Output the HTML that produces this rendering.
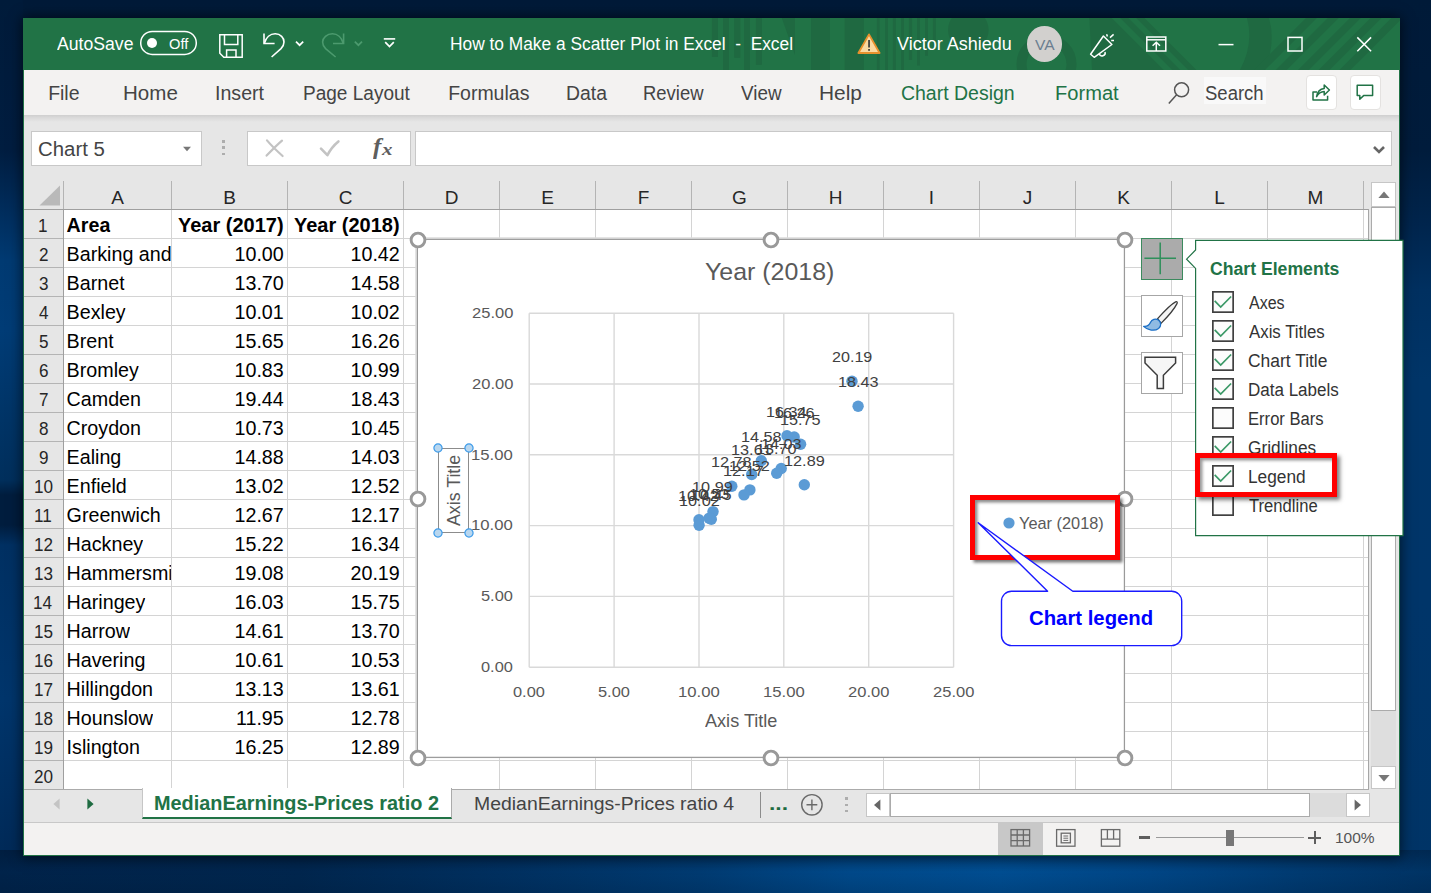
<!DOCTYPE html>
<html><head><meta charset="utf-8"><title>How to Make a Scatter Plot in Excel - Excel</title>
<style>
html,body{margin:0;padding:0}
body{width:1431px;height:893px;overflow:hidden;position:relative;font-family:"Liberation Sans",sans-serif;
background:#00234a}
.b{position:absolute;box-sizing:border-box}
.t{position:absolute;white-space:pre;transform-origin:0 50%;font-family:"Liberation Sans",sans-serif}
svg{position:absolute;overflow:visible}
</style></head><body>
<div class="b " style="left:0px;top:0px;width:1431px;height:893px;background:linear-gradient(180deg,#001a38 0px,#001c3c 150px,#00254d 225px,#003060 290px,#003568 380px,#003569 600px,#003466 893px)"></div>
<div class="b " style="left:0px;top:850px;width:1431px;height:43px;background:linear-gradient(90deg,#00234a 0px,#00264e 300px,#003060 500px,#003b72 700px,#00498a 850px,#004e92 1000px,#004686 1150px,#003b72 1300px,#003364 1431px)"></div>
<div class="b " style="left:0px;top:850px;width:1431px;height:43px;background:linear-gradient(180deg,rgba(0,20,45,.35) 0px,rgba(0,20,45,0) 22px,rgba(0,20,45,.18) 43px)"></div>
<div class="b " style="left:0px;top:0px;width:23px;height:850px;background:linear-gradient(180deg,#001b3a 0px,#001d40 150px,#002e5e 215px,#003a72 260px,#003c76 330px,#003466 420px,#002f5c 480px,#001d3e 495px,#001d3e 525px,#003062 545px,#00356b 700px,#002a58 850px)"></div>
<div class="b " style="left:23px;top:18px;width:1377px;height:838px;background:#e6e6e6;box-shadow:0 0 12px 1px rgba(0,0,0,.6)"></div>
<div class="b " style="left:23px;top:18px;width:1377px;height:838px;border:1px solid #217346;border-top:none;pointer-events:none"></div>
<div class="b " style="left:23px;top:18px;width:1377px;height:52px;background:#217346;overflow:hidden">
<svg width="1377" height="52" viewBox="23 18 1377 52" style="left:0;top:0">
<g fill="#1f6941">
<rect x="711.9" y="18" width="6.0" height="39.0"/>
<rect x="723.0" y="18" width="6.0" height="52.0"/>
<rect x="734.2" y="18" width="6.1" height="39.8"/>
<rect x="744.0" y="18" width="6.0" height="52.0"/>
<rect x="755.9" y="18" width="6.0" height="46.8"/>
<rect x="811.1" y="18" width="18.9" height="52.0"/>
<rect x="844.7" y="18" width="19.1" height="52.0"/>
<rect x="876.8" y="18" width="2.8" height="52.0"/>
<rect x="885.2" y="18" width="2.8" height="52.0"/>
<rect x="892.8" y="18" width="3.0" height="52.0"/>
<rect x="901.2" y="18" width="2.8" height="52.0"/>
<rect x="908.9" y="18" width="3.2" height="42.0"/>
<rect x="917.0" y="18" width="3.0" height="47.5"/>
<rect x="925.0" y="18" width="3.0" height="37.7"/>
<rect x="932.9" y="18" width="2.9" height="30.0"/>
<polygon points="781.8,18 795,18 795,55"/>
<circle cx="968.3" cy="29.9" r="20.3"/>
<path fill-rule="evenodd" d="M1016.5 64.1 a30 30 0 1 0 60 0 a30 30 0 1 0 -60 0 Z M1026.5 64.1 a20 20 0 1 0 40 0 a20 20 0 1 0 -40 0 Z"/>
<polygon points="1089.4,18 1111.7,18 1163.7,70 1092,70"/>
<polygon points="1120.1,18 1128.3,18 1180.3,70 1172.1,70"/>
<polygon points="1136.2,18 1144.4,18 1196.4,70 1188.2,70"/>
<path d="M1247 18 Q1254 44 1240 70 L1265 70 Q1276 42 1269 18 Z"/>
<polygon points="1306.0,18 1316.9,18 1264.9,70 1254.0,70"/>
<polygon points="1327.8,18 1338.7,18 1286.7,70 1275.8,70"/>
<polygon points="1350.0,18 1360.9,18 1308.9,70 1298.0,70"/>
<polygon points="1370.6,18 1381.5,18 1329.5,70 1318.6,70"/>
<polygon points="1391.5,18 1402.4,18 1350.4,70 1339.5,70"/>
</g></svg></div>
<span class="t" style="left:57.30px;top:36.00px;font-size:17.50px;line-height:17.50px;color:#fff;transform:scaleX(1.0072);">AutoSave</span>
<svg width="60" height="28" viewBox="139 29 60 28" style="left:139px;top:29px"><rect x="140.7" y="31.4" width="55.6" height="23" rx="11.5" fill="none" stroke="#fff" stroke-width="1.5"/></svg>
<div class="b " style="left:147.3px;top:38.2px;width:10px;height:10px;background:#fff;border-radius:50%"></div>
<span class="t" style="left:168.64px;top:37.00px;font-size:14.50px;line-height:14.50px;color:#fff;transform:scaleX(1.0115);">Off</span>
<svg width="200" height="36" viewBox="210 26 200 36" style="left:210px;top:26px" fill="none" stroke="#fff" stroke-width="1.5">
<path d="M219.8 34.8 H242.2 V57.2 H223.8 L219.8 53.2 Z"/><path d="M224.5 34.8 V44.4 H237.8 V34.8"/><path d="M226.6 57.2 V50 H236 V57.2"/>
<path d="M264 33.6 V43.5 H274.6" stroke-width="1.6"/><path d="M264.4 43.2 C266 37.5 270.2 33.8 275.2 33.8 C280.6 33.8 284 37.8 284 42 C284 45 282.6 47 281 48.6 L271.6 57" stroke-width="1.6"/>
<path d="M296 41.6 L299.6 45.2 L303.2 41.6" stroke-width="1.7"/>
<g stroke="#4c9a6e"><path d="M343.6 33.6 V43.5 H333" stroke-width="1.6"/><path d="M343.2 43.2 C341.6 37.5 337.4 33.8 332.4 33.8 C327 33.8 322.6 37.8 322.6 42 C322.6 45 324 47 325.6 48.6 L335.6 57" stroke-width="1.6"/>
<path d="M354.8 41.6 L358.4 45.2 L362 41.6" stroke-width="1.7"/></g>
<path d="M383.8 38.9 H395.2" stroke-width="1.6"/><path d="M385.2 42.2 L389.5 46.5 L393.8 42.2" stroke-width="1.7"/>
</svg>
<span class="t" style="left:449.81px;top:36.00px;font-size:17.50px;line-height:17.50px;color:#fff;transform:scaleX(0.9907);">How to Make a Scatter Plot in Excel  -  Excel</span>
<svg width="26" height="24" viewBox="856 32 26 24" style="left:856px;top:32px"><path d="M869 34.4 L879.6 53 H858.4 Z" fill="#fbd9a0" stroke="#e8912d" stroke-width="1.8" stroke-linejoin="round"/><rect x="868.2" y="40" width="1.7" height="7.5" fill="#3b3a39"/><rect x="868.2" y="49" width="1.7" height="1.8" fill="#3b3a39"/></svg>
<span class="t" style="left:896.50px;top:36.00px;font-size:17.50px;line-height:17.50px;color:#fff;transform:scaleX(1.0278);">Victor Ashiedu</span>
<div class="b " style="left:1027px;top:26.3px;width:35.4px;height:35.4px;background:#d2d0ce;border-radius:50%"></div>
<span class="t" style="left:1035.10px;top:37.00px;font-size:15.00px;line-height:15.00px;color:#6b7e90;transform:scaleX(1.0370);">VA</span>
<svg width="320" height="36" viewBox="1085 26 320 36" style="left:1085px;top:26px" fill="none" stroke="#fff" stroke-width="1.5">
<path d="M1103.4 36 L1111.9 44.5 L1094.2 57.3 L1090.6 54.2 Z" stroke-linejoin="round"/><path d="M1099.2 53.8 A3 3 0 0 0 1105 52"/>
<path d="M1106.6 34.2 L1107.4 36.6 M1110 37.6 L1113.6 34.4 M1111.2 40.6 H1114"/>
<rect x="1146.8" y="37" width="19" height="14"/><path d="M1146.8 39.8 H1165.8"/><path d="M1156.3 51 V42.4 M1152.6 45.8 L1156.3 42.2 L1160 45.8"/>
<path d="M1218.5 44.6 H1233.5"/>
<rect x="1288" y="37.4" width="14" height="13.6"/>
<path d="M1357.3 37.4 L1371.1 51.2 M1371.1 37.4 L1357.3 51.2"/>
</svg>
<div class="b " style="left:24px;top:70px;width:1375px;height:45px;background:#f3f2f1"></div>
<div class="b " style="left:24px;top:115px;width:1375px;height:7px;background:linear-gradient(180deg,#cfcfcf 0%,#dadada 40%,#e6e6e6 100%)"></div>
<span class="t" style="left:48.14px;top:84.00px;font-size:19.50px;line-height:19.50px;color:#444;">File</span>
<span class="t" style="left:122.96px;top:84.00px;font-size:19.50px;line-height:19.50px;color:#444;transform:scaleX(1.0539);">Home</span>
<span class="t" style="left:214.54px;top:84.00px;font-size:19.50px;line-height:19.50px;color:#444;transform:scaleX(1.0044);">Insert</span>
<span class="t" style="left:302.88px;top:84.00px;font-size:19.50px;line-height:19.50px;color:#444;transform:scaleX(0.9756);">Page Layout</span>
<span class="t" style="left:448.14px;top:84.00px;font-size:19.50px;line-height:19.50px;color:#444;">Formulas</span>
<span class="t" style="left:565.55px;top:84.00px;font-size:19.50px;line-height:19.50px;color:#444;transform:scaleX(0.9929);">Data</span>
<span class="t" style="left:642.52px;top:84.00px;font-size:19.50px;line-height:19.50px;color:#444;transform:scaleX(0.9455);">Review</span>
<span class="t" style="left:741.30px;top:84.00px;font-size:19.50px;line-height:19.50px;color:#444;transform:scaleX(0.9660);">View</span>
<span class="t" style="left:818.53px;top:84.00px;font-size:19.50px;line-height:19.50px;color:#444;transform:scaleX(1.0707);">Help</span>
<span class="t" style="left:900.92px;top:84.00px;font-size:19.50px;line-height:19.50px;color:#217346;">Chart Design</span>
<span class="t" style="left:1054.99px;top:84.00px;font-size:19.50px;line-height:19.50px;color:#217346;transform:scaleX(1.0306);">Format</span>
<svg width="26" height="26" viewBox="1166 80 26 26" style="left:1166px;top:80px" fill="none" stroke="#555" stroke-width="1.5"><circle cx="1181.6" cy="89.8" r="7"/><path d="M1176.6 94.8 L1168.8 103.4"/></svg>
<div class="b " style="left:1204px;top:77px;width:62px;height:27px;background:#f9f9f9"></div>
<span class="t" style="left:1205.07px;top:84.00px;font-size:19.50px;line-height:19.50px;color:#444;transform:scaleX(0.9486);">Search</span>
<div class="b " style="left:1305.5px;top:74.5px;width:31px;height:35px;background:#fff;border:1px solid #e4e2e0;border-radius:4px"></div>
<div class="b " style="left:1349.5px;top:74.5px;width:31px;height:35px;background:#fff;border:1px solid #e4e2e0;border-radius:4px"></div>
<svg width="80" height="30" viewBox="1306 78 80 30" style="left:1306px;top:78px" fill="none" stroke="#217346" stroke-width="1.5" stroke-linejoin="round">
<path d="M1317 92 H1313 V100 H1327.6 V95.8"/><path d="M1316.6 96.6 C1317.4 91.6 1320.4 89 1324.2 88.6 V85 L1329.4 90 L1324.2 95 V91.6 C1321 91.8 1318.4 93.4 1316.6 96.6 Z"/>
<path d="M1357.2 85.2 H1372.6 V95.6 H1363.6 L1359.8 99.2 V95.6 H1357.2 Z"/>
</svg>
<div class="b " style="left:31px;top:131px;width:171px;height:35px;background:#fff;border:1px solid #c8c8c8"></div>
<span class="t" style="left:37.58px;top:140.00px;font-size:19.50px;line-height:19.50px;color:#444;transform:scaleX(1.0449);">Chart 5</span>
<svg width="10" height="6" viewBox="0 0 10 6" style="left:182px;top:146px"><path d="M1 0.8 H9 L5 5.2 Z" fill="#777"/></svg>
<div class="b " style="left:222.3px;top:140px;width:2.6px;height:2.6px;background:#adadad"></div>
<div class="b " style="left:222.3px;top:146.3px;width:2.6px;height:2.6px;background:#adadad"></div>
<div class="b " style="left:222.3px;top:152.6px;width:2.6px;height:2.6px;background:#adadad"></div>
<div class="b " style="left:247px;top:131px;width:164px;height:35px;background:#fff;border:1px solid #c8c8c8"></div>
<svg width="160" height="30" viewBox="250 134 160 30" style="left:250px;top:134px" fill="none">
<path d="M267 140.4 C270 144 277 151 282.6 156 M282 140.6 C278 144 271 151 266.6 155.6" stroke="#c3c3c3" stroke-width="2.2" stroke-linecap="round"/>
<path d="M321 148.6 L327.4 155.2 C330 150 334 145 338.4 141.4" stroke="#c3c3c3" stroke-width="2.6" stroke-linecap="round" stroke-linejoin="round"/></svg>
<span class="t" style="left:373.20px;top:133.68px;font-size:24.00px;line-height:24.00px;color:#5e5e5e;font-weight:bold;font-style:italic;font-family:'Liberation Serif',serif;transform:scaleX(1.0417);">f</span>
<span class="t" style="left:381.72px;top:141.49px;font-size:17.00px;line-height:17.00px;color:#5e5e5e;font-weight:bold;font-style:italic;font-family:'Liberation Serif',serif;transform:scaleX(1.2359);">x</span>
<div class="b " style="left:415px;top:131px;width:977px;height:35px;background:#fff;border:1px solid #c8c8c8"></div>
<svg width="14" height="10" viewBox="0 0 14 10" style="left:1371.5px;top:144.5px"><path d="M2 2 L7 7 L12 2" fill="none" stroke="#666" stroke-width="2.6"/></svg>
<div class="b " style="left:24px;top:210px;width:1345px;height:579px;background:#fff"></div>
<div class="b " style="left:171px;top:210px;width:1px;height:579px;background:#d4d4d4"></div>
<div class="b " style="left:287px;top:210px;width:1px;height:579px;background:#d4d4d4"></div>
<div class="b " style="left:403px;top:210px;width:1px;height:579px;background:#d4d4d4"></div>
<div class="b " style="left:499px;top:210px;width:1px;height:579px;background:#d4d4d4"></div>
<div class="b " style="left:595px;top:210px;width:1px;height:579px;background:#d4d4d4"></div>
<div class="b " style="left:691px;top:210px;width:1px;height:579px;background:#d4d4d4"></div>
<div class="b " style="left:787px;top:210px;width:1px;height:579px;background:#d4d4d4"></div>
<div class="b " style="left:883px;top:210px;width:1px;height:579px;background:#d4d4d4"></div>
<div class="b " style="left:979px;top:210px;width:1px;height:579px;background:#d4d4d4"></div>
<div class="b " style="left:1075px;top:210px;width:1px;height:579px;background:#d4d4d4"></div>
<div class="b " style="left:1171px;top:210px;width:1px;height:579px;background:#d4d4d4"></div>
<div class="b " style="left:1267px;top:210px;width:1px;height:579px;background:#d4d4d4"></div>
<div class="b " style="left:1363px;top:210px;width:1px;height:579px;background:#d4d4d4"></div>
<div class="b " style="left:64px;top:238px;width:1305px;height:1px;background:#d4d4d4"></div>
<div class="b " style="left:64px;top:267px;width:1305px;height:1px;background:#d4d4d4"></div>
<div class="b " style="left:64px;top:296px;width:1305px;height:1px;background:#d4d4d4"></div>
<div class="b " style="left:64px;top:325px;width:1305px;height:1px;background:#d4d4d4"></div>
<div class="b " style="left:64px;top:354px;width:1305px;height:1px;background:#d4d4d4"></div>
<div class="b " style="left:64px;top:383px;width:1305px;height:1px;background:#d4d4d4"></div>
<div class="b " style="left:64px;top:412px;width:1305px;height:1px;background:#d4d4d4"></div>
<div class="b " style="left:64px;top:441px;width:1305px;height:1px;background:#d4d4d4"></div>
<div class="b " style="left:64px;top:470px;width:1305px;height:1px;background:#d4d4d4"></div>
<div class="b " style="left:64px;top:499px;width:1305px;height:1px;background:#d4d4d4"></div>
<div class="b " style="left:64px;top:528px;width:1305px;height:1px;background:#d4d4d4"></div>
<div class="b " style="left:64px;top:557px;width:1305px;height:1px;background:#d4d4d4"></div>
<div class="b " style="left:64px;top:586px;width:1305px;height:1px;background:#d4d4d4"></div>
<div class="b " style="left:64px;top:615px;width:1305px;height:1px;background:#d4d4d4"></div>
<div class="b " style="left:64px;top:644px;width:1305px;height:1px;background:#d4d4d4"></div>
<div class="b " style="left:64px;top:673px;width:1305px;height:1px;background:#d4d4d4"></div>
<div class="b " style="left:64px;top:702px;width:1305px;height:1px;background:#d4d4d4"></div>
<div class="b " style="left:64px;top:731px;width:1305px;height:1px;background:#d4d4d4"></div>
<div class="b " style="left:64px;top:760px;width:1305px;height:1px;background:#d4d4d4"></div>
<div class="b " style="left:64px;top:789px;width:1305px;height:1px;background:#d4d4d4"></div>
<div class="b " style="left:24px;top:182px;width:1345px;height:27px;background:#e6e6e6"></div>
<div class="b " style="left:24px;top:209px;width:1345px;height:1px;background:#9f9f9f"></div>
<div class="b " style="left:63px;top:181px;width:1px;height:28px;background:#b4b4b4"></div>
<div class="b " style="left:171px;top:181px;width:1px;height:28px;background:#b4b4b4"></div>
<div class="b " style="left:287px;top:181px;width:1px;height:28px;background:#b4b4b4"></div>
<div class="b " style="left:403px;top:181px;width:1px;height:28px;background:#b4b4b4"></div>
<div class="b " style="left:499px;top:181px;width:1px;height:28px;background:#b4b4b4"></div>
<div class="b " style="left:595px;top:181px;width:1px;height:28px;background:#b4b4b4"></div>
<div class="b " style="left:691px;top:181px;width:1px;height:28px;background:#b4b4b4"></div>
<div class="b " style="left:787px;top:181px;width:1px;height:28px;background:#b4b4b4"></div>
<div class="b " style="left:883px;top:181px;width:1px;height:28px;background:#b4b4b4"></div>
<div class="b " style="left:979px;top:181px;width:1px;height:28px;background:#b4b4b4"></div>
<div class="b " style="left:1075px;top:181px;width:1px;height:28px;background:#b4b4b4"></div>
<div class="b " style="left:1171px;top:181px;width:1px;height:28px;background:#b4b4b4"></div>
<div class="b " style="left:1267px;top:181px;width:1px;height:28px;background:#b4b4b4"></div>
<div class="b " style="left:1363px;top:181px;width:1px;height:28px;background:#b4b4b4"></div>
<span class="t" style="left:111.16px;top:188.00px;font-size:19.00px;line-height:19.00px;color:#262626;">A</span>
<span class="t" style="left:223.16px;top:188.00px;font-size:19.00px;line-height:19.00px;color:#262626;">B</span>
<span class="t" style="left:338.64px;top:188.00px;font-size:19.00px;line-height:19.00px;color:#262626;">C</span>
<span class="t" style="left:444.64px;top:188.00px;font-size:19.00px;line-height:19.00px;color:#262626;">D</span>
<span class="t" style="left:541.16px;top:188.00px;font-size:19.00px;line-height:19.00px;color:#262626;">E</span>
<span class="t" style="left:637.70px;top:188.00px;font-size:19.00px;line-height:19.00px;color:#262626;">F</span>
<span class="t" style="left:732.11px;top:188.00px;font-size:19.00px;line-height:19.00px;color:#262626;">G</span>
<span class="t" style="left:828.64px;top:188.00px;font-size:19.00px;line-height:19.00px;color:#262626;">H</span>
<span class="t" style="left:928.86px;top:188.00px;font-size:19.00px;line-height:19.00px;color:#262626;">I</span>
<span class="t" style="left:1022.75px;top:188.00px;font-size:19.00px;line-height:19.00px;color:#262626;">J</span>
<span class="t" style="left:1117.16px;top:188.00px;font-size:19.00px;line-height:19.00px;color:#262626;">K</span>
<span class="t" style="left:1214.22px;top:188.00px;font-size:19.00px;line-height:19.00px;color:#262626;">L</span>
<span class="t" style="left:1307.59px;top:188.00px;font-size:19.00px;line-height:19.00px;color:#262626;">M</span>
<svg width="22" height="22" viewBox="0 0 22 22" style="left:39px;top:185px"><path d="M21 0.5 V20.5 H0.5 Z" fill="#b9b9b9"/></svg>
<div class="b " style="left:24px;top:210px;width:39px;height:579px;background:#e6e6e6"></div>
<div class="b " style="left:63px;top:210px;width:1px;height:579px;background:#9f9f9f"></div>
<div class="b " style="left:24px;top:238px;width:39px;height:1px;background:#b4b4b4"></div>
<div class="b " style="left:24px;top:267px;width:39px;height:1px;background:#b4b4b4"></div>
<div class="b " style="left:24px;top:296px;width:39px;height:1px;background:#b4b4b4"></div>
<div class="b " style="left:24px;top:325px;width:39px;height:1px;background:#b4b4b4"></div>
<div class="b " style="left:24px;top:354px;width:39px;height:1px;background:#b4b4b4"></div>
<div class="b " style="left:24px;top:383px;width:39px;height:1px;background:#b4b4b4"></div>
<div class="b " style="left:24px;top:412px;width:39px;height:1px;background:#b4b4b4"></div>
<div class="b " style="left:24px;top:441px;width:39px;height:1px;background:#b4b4b4"></div>
<div class="b " style="left:24px;top:470px;width:39px;height:1px;background:#b4b4b4"></div>
<div class="b " style="left:24px;top:499px;width:39px;height:1px;background:#b4b4b4"></div>
<div class="b " style="left:24px;top:528px;width:39px;height:1px;background:#b4b4b4"></div>
<div class="b " style="left:24px;top:557px;width:39px;height:1px;background:#b4b4b4"></div>
<div class="b " style="left:24px;top:586px;width:39px;height:1px;background:#b4b4b4"></div>
<div class="b " style="left:24px;top:615px;width:39px;height:1px;background:#b4b4b4"></div>
<div class="b " style="left:24px;top:644px;width:39px;height:1px;background:#b4b4b4"></div>
<div class="b " style="left:24px;top:673px;width:39px;height:1px;background:#b4b4b4"></div>
<div class="b " style="left:24px;top:702px;width:39px;height:1px;background:#b4b4b4"></div>
<div class="b " style="left:24px;top:731px;width:39px;height:1px;background:#b4b4b4"></div>
<div class="b " style="left:24px;top:760px;width:39px;height:1px;background:#b4b4b4"></div>
<div class="b " style="left:24px;top:789px;width:39px;height:1px;background:#b4b4b4"></div>
<span class="t" style="left:38.40px;top:216.00px;font-size:19.00px;line-height:19.00px;color:#262626;transform:scaleX(0.9000);">1</span>
<span class="t" style="left:38.61px;top:245.00px;font-size:19.00px;line-height:19.00px;color:#262626;transform:scaleX(0.9000);">2</span>
<span class="t" style="left:38.70px;top:274.00px;font-size:19.00px;line-height:19.00px;color:#262626;transform:scaleX(0.9000);">3</span>
<span class="t" style="left:38.70px;top:303.00px;font-size:19.00px;line-height:19.00px;color:#262626;transform:scaleX(0.9000);">4</span>
<span class="t" style="left:38.65px;top:332.00px;font-size:19.00px;line-height:19.00px;color:#262626;transform:scaleX(0.9000);">5</span>
<span class="t" style="left:38.57px;top:361.00px;font-size:19.00px;line-height:19.00px;color:#262626;transform:scaleX(0.9000);">6</span>
<span class="t" style="left:38.61px;top:390.00px;font-size:19.00px;line-height:19.00px;color:#262626;transform:scaleX(0.9000);">7</span>
<span class="t" style="left:38.65px;top:419.00px;font-size:19.00px;line-height:19.00px;color:#262626;transform:scaleX(0.9000);">8</span>
<span class="t" style="left:38.65px;top:448.00px;font-size:19.00px;line-height:19.00px;color:#262626;transform:scaleX(0.9000);">9</span>
<span class="t" style="left:33.57px;top:477.00px;font-size:19.00px;line-height:19.00px;color:#262626;transform:scaleX(0.9000);">10</span>
<span class="t" style="left:34.29px;top:506.00px;font-size:19.00px;line-height:19.00px;color:#262626;transform:scaleX(0.9000);">11</span>
<span class="t" style="left:33.65px;top:535.00px;font-size:19.00px;line-height:19.00px;color:#262626;transform:scaleX(0.9000);">12</span>
<span class="t" style="left:33.61px;top:564.00px;font-size:19.00px;line-height:19.00px;color:#262626;transform:scaleX(0.9000);">13</span>
<span class="t" style="left:33.48px;top:593.00px;font-size:19.00px;line-height:19.00px;color:#262626;transform:scaleX(0.9000);">14</span>
<span class="t" style="left:33.61px;top:622.00px;font-size:19.00px;line-height:19.00px;color:#262626;transform:scaleX(0.9000);">15</span>
<span class="t" style="left:33.61px;top:651.00px;font-size:19.00px;line-height:19.00px;color:#262626;transform:scaleX(0.9000);">16</span>
<span class="t" style="left:33.65px;top:680.00px;font-size:19.00px;line-height:19.00px;color:#262626;transform:scaleX(0.9000);">17</span>
<span class="t" style="left:33.61px;top:709.00px;font-size:19.00px;line-height:19.00px;color:#262626;transform:scaleX(0.9000);">18</span>
<span class="t" style="left:33.65px;top:738.00px;font-size:19.00px;line-height:19.00px;color:#262626;transform:scaleX(0.9000);">19</span>
<span class="t" style="left:33.78px;top:767.00px;font-size:19.00px;line-height:19.00px;color:#262626;transform:scaleX(0.9000);">20</span>
<div class="b " style="left:1368px;top:209px;width:1px;height:580px;background:#a6a6a6"></div>
<span class="t" style="left:66.60px;top:216.00px;font-size:19.70px;line-height:19.70px;color:#000;font-weight:bold;clip-path:inset(-5px 0.0px -5px 0);">Area</span>
<span class="t" style="left:178.08px;top:216.00px;font-size:19.70px;line-height:19.70px;color:#000;font-weight:bold;transform:scaleX(1.0160);">Year (2017)</span>
<span class="t" style="left:294.08px;top:216.00px;font-size:19.70px;line-height:19.70px;color:#000;font-weight:bold;transform:scaleX(1.0160);">Year (2018)</span>
<span class="t" style="left:66.60px;top:245.00px;font-size:19.70px;line-height:19.70px;color:#000;clip-path:inset(-5px 0.7px -5px 0);">Barking and</span>
<span class="t" style="left:234.50px;top:245.00px;font-size:19.70px;line-height:19.70px;color:#000;">10.00</span>
<span class="t" style="left:350.50px;top:245.00px;font-size:19.70px;line-height:19.70px;color:#000;">10.42</span>
<span class="t" style="left:66.60px;top:274.00px;font-size:19.70px;line-height:19.70px;color:#000;clip-path:inset(-5px 0.0px -5px 0);">Barnet</span>
<span class="t" style="left:234.50px;top:274.00px;font-size:19.70px;line-height:19.70px;color:#000;">13.70</span>
<span class="t" style="left:350.50px;top:274.00px;font-size:19.70px;line-height:19.70px;color:#000;">14.58</span>
<span class="t" style="left:66.60px;top:303.00px;font-size:19.70px;line-height:19.70px;color:#000;clip-path:inset(-5px 0.0px -5px 0);">Bexley</span>
<span class="t" style="left:234.50px;top:303.00px;font-size:19.70px;line-height:19.70px;color:#000;">10.01</span>
<span class="t" style="left:350.50px;top:303.00px;font-size:19.70px;line-height:19.70px;color:#000;">10.02</span>
<span class="t" style="left:66.60px;top:332.00px;font-size:19.70px;line-height:19.70px;color:#000;clip-path:inset(-5px 0.0px -5px 0);">Brent</span>
<span class="t" style="left:234.50px;top:332.00px;font-size:19.70px;line-height:19.70px;color:#000;">15.65</span>
<span class="t" style="left:350.50px;top:332.00px;font-size:19.70px;line-height:19.70px;color:#000;">16.26</span>
<span class="t" style="left:66.60px;top:361.00px;font-size:19.70px;line-height:19.70px;color:#000;clip-path:inset(-5px 0.0px -5px 0);">Bromley</span>
<span class="t" style="left:234.50px;top:361.00px;font-size:19.70px;line-height:19.70px;color:#000;">10.83</span>
<span class="t" style="left:350.50px;top:361.00px;font-size:19.70px;line-height:19.70px;color:#000;">10.99</span>
<span class="t" style="left:66.60px;top:390.00px;font-size:19.70px;line-height:19.70px;color:#000;clip-path:inset(-5px 0.0px -5px 0);">Camden</span>
<span class="t" style="left:234.50px;top:390.00px;font-size:19.70px;line-height:19.70px;color:#000;">19.44</span>
<span class="t" style="left:350.50px;top:390.00px;font-size:19.70px;line-height:19.70px;color:#000;">18.43</span>
<span class="t" style="left:66.60px;top:419.00px;font-size:19.70px;line-height:19.70px;color:#000;clip-path:inset(-5px 0.0px -5px 0);">Croydon</span>
<span class="t" style="left:234.50px;top:419.00px;font-size:19.70px;line-height:19.70px;color:#000;">10.73</span>
<span class="t" style="left:350.50px;top:419.00px;font-size:19.70px;line-height:19.70px;color:#000;">10.45</span>
<span class="t" style="left:66.60px;top:448.00px;font-size:19.70px;line-height:19.70px;color:#000;clip-path:inset(-5px 0.0px -5px 0);">Ealing</span>
<span class="t" style="left:234.50px;top:448.00px;font-size:19.70px;line-height:19.70px;color:#000;">14.88</span>
<span class="t" style="left:350.50px;top:448.00px;font-size:19.70px;line-height:19.70px;color:#000;">14.03</span>
<span class="t" style="left:66.60px;top:477.00px;font-size:19.70px;line-height:19.70px;color:#000;clip-path:inset(-5px 0.0px -5px 0);">Enfield</span>
<span class="t" style="left:234.50px;top:477.00px;font-size:19.70px;line-height:19.70px;color:#000;">13.02</span>
<span class="t" style="left:350.50px;top:477.00px;font-size:19.70px;line-height:19.70px;color:#000;">12.52</span>
<span class="t" style="left:66.60px;top:506.00px;font-size:19.70px;line-height:19.70px;color:#000;clip-path:inset(-5px 0.0px -5px 0);">Greenwich</span>
<span class="t" style="left:234.50px;top:506.00px;font-size:19.70px;line-height:19.70px;color:#000;">12.67</span>
<span class="t" style="left:350.50px;top:506.00px;font-size:19.70px;line-height:19.70px;color:#000;">12.17</span>
<span class="t" style="left:66.60px;top:535.00px;font-size:19.70px;line-height:19.70px;color:#000;clip-path:inset(-5px 0.0px -5px 0);">Hackney</span>
<span class="t" style="left:234.50px;top:535.00px;font-size:19.70px;line-height:19.70px;color:#000;">15.22</span>
<span class="t" style="left:350.50px;top:535.00px;font-size:19.70px;line-height:19.70px;color:#000;">16.34</span>
<span class="t" style="left:66.60px;top:564.00px;font-size:19.70px;line-height:19.70px;color:#000;clip-path:inset(-5px 1.8px -5px 0);">Hammersmi</span>
<span class="t" style="left:234.50px;top:564.00px;font-size:19.70px;line-height:19.70px;color:#000;">19.08</span>
<span class="t" style="left:350.50px;top:564.00px;font-size:19.70px;line-height:19.70px;color:#000;">20.19</span>
<span class="t" style="left:66.60px;top:593.00px;font-size:19.70px;line-height:19.70px;color:#000;clip-path:inset(-5px 0.0px -5px 0);">Haringey</span>
<span class="t" style="left:234.50px;top:593.00px;font-size:19.70px;line-height:19.70px;color:#000;">16.03</span>
<span class="t" style="left:350.50px;top:593.00px;font-size:19.70px;line-height:19.70px;color:#000;">15.75</span>
<span class="t" style="left:66.60px;top:622.00px;font-size:19.70px;line-height:19.70px;color:#000;clip-path:inset(-5px 0.0px -5px 0);">Harrow</span>
<span class="t" style="left:234.50px;top:622.00px;font-size:19.70px;line-height:19.70px;color:#000;">14.61</span>
<span class="t" style="left:350.50px;top:622.00px;font-size:19.70px;line-height:19.70px;color:#000;">13.70</span>
<span class="t" style="left:66.60px;top:651.00px;font-size:19.70px;line-height:19.70px;color:#000;clip-path:inset(-5px 0.0px -5px 0);">Havering</span>
<span class="t" style="left:234.50px;top:651.00px;font-size:19.70px;line-height:19.70px;color:#000;">10.61</span>
<span class="t" style="left:350.50px;top:651.00px;font-size:19.70px;line-height:19.70px;color:#000;">10.53</span>
<span class="t" style="left:66.60px;top:680.00px;font-size:19.70px;line-height:19.70px;color:#000;clip-path:inset(-5px 0.0px -5px 0);">Hillingdon</span>
<span class="t" style="left:234.50px;top:680.00px;font-size:19.70px;line-height:19.70px;color:#000;">13.13</span>
<span class="t" style="left:350.50px;top:680.00px;font-size:19.70px;line-height:19.70px;color:#000;">13.61</span>
<span class="t" style="left:66.60px;top:709.00px;font-size:19.70px;line-height:19.70px;color:#000;clip-path:inset(-5px 0.0px -5px 0);">Hounslow</span>
<span class="t" style="left:235.96px;top:709.00px;font-size:19.70px;line-height:19.70px;color:#000;">11.95</span>
<span class="t" style="left:350.50px;top:709.00px;font-size:19.70px;line-height:19.70px;color:#000;">12.78</span>
<span class="t" style="left:66.60px;top:738.00px;font-size:19.70px;line-height:19.70px;color:#000;clip-path:inset(-5px 0.0px -5px 0);">Islington</span>
<span class="t" style="left:234.50px;top:738.00px;font-size:19.70px;line-height:19.70px;color:#000;">16.25</span>
<span class="t" style="left:350.50px;top:738.00px;font-size:19.70px;line-height:19.70px;color:#000;">12.89</span>
<div class="b " style="left:1371px;top:182px;width:25px;height:25px;background:#fff;border:1px solid #c6c6c6"></div>
<svg width="12" height="8" viewBox="0 0 12 8" style="left:1377.5px;top:190.5px"><path d="M6 0.6 L11.6 7 H0.4 Z" fill="#777"/></svg>
<div class="b " style="left:1371px;top:207px;width:25px;height:504px;background:#fff;border:1px solid #ababab"></div>
<div class="b " style="left:1371px;top:711px;width:25px;height:55px;background:#dedede"></div>
<div class="b " style="left:1371px;top:766px;width:25px;height:23px;background:#fff;border:1px solid #c6c6c6"></div>
<svg width="12" height="8" viewBox="0 0 12 8" style="left:1377.5px;top:774px"><path d="M6 7.4 L11.6 1 H0.4 Z" fill="#777"/></svg>
<svg width="720" height="530" viewBox="412 234 720 530" style="left:412px;top:234px"><rect x="416" y="238" width="708.4" height="519.4" fill="#fff" stroke="#dcdcdc" stroke-width="1.5"/><rect x="417.4" y="239.35" width="707" height="518" fill="#fff" stroke="#9a9a9a" stroke-width="1.2"/></svg>
<svg width="1431" height="893" viewBox="0 0 1431 893" style="left:0;top:0;pointer-events:none"><g stroke="#d9d9d9" stroke-width="1.4" fill="none"><path d="M529.2 313.2 V667.2"/><path d="M529.2 667.2 H953.6"/><path d="M614.1 313.2 V667.2"/><path d="M529.2 596.4 H953.6"/><path d="M699.0 313.2 V667.2"/><path d="M529.2 525.6 H953.6"/><path d="M783.8 313.2 V667.2"/><path d="M529.2 454.8 H953.6"/><path d="M868.7 313.2 V667.2"/><path d="M529.2 384.0 H953.6"/><path d="M953.6 313.2 V667.2"/><path d="M529.2 313.2 H953.6"/></g><g fill="#5b9bd5"><circle cx="699.0" cy="519.7" r="5.7"/><circle cx="761.3" cy="460.7" r="5.7"/><circle cx="699.1" cy="525.3" r="5.7"/><circle cx="794.2" cy="437.0" r="5.7"/><circle cx="713.0" cy="511.6" r="5.7"/><circle cx="858.1" cy="406.2" r="5.7"/><circle cx="711.3" cy="519.2" r="5.7"/><circle cx="781.2" cy="468.5" r="5.7"/><circle cx="749.9" cy="489.9" r="5.7"/><circle cx="744.0" cy="494.9" r="5.7"/><circle cx="787.0" cy="435.8" r="5.7"/><circle cx="852.0" cy="381.3" r="5.7"/><circle cx="800.6" cy="444.2" r="5.7"/><circle cx="776.7" cy="473.2" r="5.7"/><circle cx="709.2" cy="518.1" r="5.7"/><circle cx="751.7" cy="474.5" r="5.7"/><circle cx="731.8" cy="486.2" r="5.7"/><circle cx="804.3" cy="484.7" r="5.7"/></g><circle cx="1009" cy="523" r="5.6" fill="#5b9bd5"/></svg>
<span class="t" style="left:481.15px;top:659.00px;font-size:15.50px;line-height:15.50px;color:#595959;transform:scaleX(1.0557);">0.00</span>
<span class="t" style="left:513.29px;top:684.00px;font-size:15.50px;line-height:15.50px;color:#595959;transform:scaleX(1.0557);">0.00</span>
<span class="t" style="left:481.06px;top:588.00px;font-size:15.50px;line-height:15.50px;color:#595959;transform:scaleX(1.0585);">5.00</span>
<span class="t" style="left:598.08px;top:684.00px;font-size:15.50px;line-height:15.50px;color:#595959;transform:scaleX(1.0585);">5.00</span>
<span class="t" style="left:471.24px;top:517.00px;font-size:15.50px;line-height:15.50px;color:#595959;transform:scaleX(1.0772);">10.00</span>
<span class="t" style="left:677.76px;top:684.00px;font-size:15.50px;line-height:15.50px;color:#595959;transform:scaleX(1.0772);">10.00</span>
<span class="t" style="left:471.24px;top:447.00px;font-size:15.50px;line-height:15.50px;color:#595959;transform:scaleX(1.0772);">15.00</span>
<span class="t" style="left:762.64px;top:684.00px;font-size:15.50px;line-height:15.50px;color:#595959;transform:scaleX(1.0772);">15.00</span>
<span class="t" style="left:471.67px;top:376.00px;font-size:15.50px;line-height:15.50px;color:#595959;transform:scaleX(1.0660);">20.00</span>
<span class="t" style="left:847.94px;top:684.00px;font-size:15.50px;line-height:15.50px;color:#595959;transform:scaleX(1.0660);">20.00</span>
<span class="t" style="left:471.67px;top:305.00px;font-size:15.50px;line-height:15.50px;color:#595959;transform:scaleX(1.0660);">25.00</span>
<span class="t" style="left:932.82px;top:684.00px;font-size:15.50px;line-height:15.50px;color:#595959;transform:scaleX(1.0660);">25.00</span>
<span class="t" style="left:678.37px;top:488.00px;font-size:15.50px;line-height:15.50px;color:#404040;transform:scaleX(1.0502);">10.42</span>
<span class="t" style="left:740.75px;top:429.00px;font-size:15.50px;line-height:15.50px;color:#404040;transform:scaleX(1.0480);">14.58</span>
<span class="t" style="left:678.54px;top:493.00px;font-size:15.50px;line-height:15.50px;color:#404040;transform:scaleX(1.0502);">10.02</span>
<span class="t" style="left:773.63px;top:405.00px;font-size:15.50px;line-height:15.50px;color:#404040;transform:scaleX(1.0480);">16.26</span>
<span class="t" style="left:692.36px;top:479.00px;font-size:15.50px;line-height:15.50px;color:#404040;transform:scaleX(1.0502);">10.99</span>
<span class="t" style="left:837.53px;top:374.00px;font-size:15.50px;line-height:15.50px;color:#404040;transform:scaleX(1.0480);">18.43</span>
<span class="t" style="left:690.68px;top:487.00px;font-size:15.50px;line-height:15.50px;color:#404040;transform:scaleX(1.0480);">10.45</span>
<span class="t" style="left:760.65px;top:436.00px;font-size:15.50px;line-height:15.50px;color:#404040;transform:scaleX(1.0480);">14.03</span>
<span class="t" style="left:729.29px;top:458.00px;font-size:15.50px;line-height:15.50px;color:#404040;transform:scaleX(1.0502);">12.52</span>
<span class="t" style="left:723.39px;top:463.00px;font-size:15.50px;line-height:15.50px;color:#404040;transform:scaleX(1.0502);">12.17</span>
<span class="t" style="left:766.39px;top:404.00px;font-size:15.50px;line-height:15.50px;color:#404040;transform:scaleX(1.0414);">16.34</span>
<span class="t" style="left:831.87px;top:349.00px;font-size:15.50px;line-height:15.50px;color:#404040;transform:scaleX(1.0392);">20.19</span>
<span class="t" style="left:780.04px;top:412.00px;font-size:15.50px;line-height:15.50px;color:#404040;transform:scaleX(1.0480);">15.75</span>
<span class="t" style="left:756.10px;top:441.00px;font-size:15.50px;line-height:15.50px;color:#404040;transform:scaleX(1.0458);">13.70</span>
<span class="t" style="left:688.66px;top:486.00px;font-size:15.50px;line-height:15.50px;color:#404040;transform:scaleX(1.0480);">10.53</span>
<span class="t" style="left:731.14px;top:442.00px;font-size:15.50px;line-height:15.50px;color:#404040;transform:scaleX(1.0502);">13.61</span>
<span class="t" style="left:711.25px;top:454.00px;font-size:15.50px;line-height:15.50px;color:#404040;transform:scaleX(1.0480);">12.78</span>
<span class="t" style="left:783.74px;top:453.00px;font-size:15.50px;line-height:15.50px;color:#404040;transform:scaleX(1.0502);">12.89</span>
<span class="t" style="left:704.75px;top:260.00px;font-size:24.20px;line-height:24.20px;color:#595959;transform:scaleX(1.0310);">Year (2018)</span>
<span class="t" style="left:705.15px;top:713.00px;font-size:17.70px;line-height:17.70px;color:#595959;transform:scaleX(1.0229);">Axis Title</span>
<div class="b " style="left:438px;top:448px;width:31px;height:85px;border:1px solid #8c8c8c;background:#fff"></div>
<span class="t" style="left:446.2px;top:526.4px;font-size:17.7px;line-height:17.7px;color:#595959;transform-origin:0 0;transform:rotate(-90deg) scaleX(1.0054)">Axis Title</span>
<svg width="12" height="12" viewBox="-6 -6 12 12" style="left:432.0px;top:442.0px"><circle r="4.1" fill="#b9d7ef" stroke="#3d9be9" stroke-width="1.2"/></svg>
<svg width="12" height="12" viewBox="-6 -6 12 12" style="left:462.5px;top:442.0px"><circle r="4.1" fill="#b9d7ef" stroke="#3d9be9" stroke-width="1.2"/></svg>
<svg width="12" height="12" viewBox="-6 -6 12 12" style="left:432.0px;top:527.0px"><circle r="4.1" fill="#b9d7ef" stroke="#3d9be9" stroke-width="1.2"/></svg>
<svg width="12" height="12" viewBox="-6 -6 12 12" style="left:462.5px;top:527.0px"><circle r="4.1" fill="#b9d7ef" stroke="#3d9be9" stroke-width="1.2"/></svg>
<span class="t" style="left:1018.67px;top:516.00px;font-size:15.90px;line-height:15.90px;color:#595959;transform:scaleX(1.0277);">Year (2018)</span>
<svg width="20" height="20" viewBox="-10 -10 20 20" style="left:407.6px;top:229.5px"><circle r="6.9" fill="#fff" stroke="#999" stroke-width="2.9"/></svg>
<svg width="20" height="20" viewBox="-10 -10 20 20" style="left:761.0px;top:229.5px"><circle r="6.9" fill="#fff" stroke="#999" stroke-width="2.9"/></svg>
<svg width="20" height="20" viewBox="-10 -10 20 20" style="left:1114.7px;top:229.5px"><circle r="6.9" fill="#fff" stroke="#999" stroke-width="2.9"/></svg>
<svg width="20" height="20" viewBox="-10 -10 20 20" style="left:407.6px;top:488.5px"><circle r="6.9" fill="#fff" stroke="#999" stroke-width="2.9"/></svg>
<svg width="20" height="20" viewBox="-10 -10 20 20" style="left:1114.7px;top:488.5px"><circle r="6.9" fill="#fff" stroke="#999" stroke-width="2.9"/></svg>
<svg width="20" height="20" viewBox="-10 -10 20 20" style="left:407.6px;top:747.5px"><circle r="6.9" fill="#fff" stroke="#999" stroke-width="2.9"/></svg>
<svg width="20" height="20" viewBox="-10 -10 20 20" style="left:761.0px;top:747.5px"><circle r="6.9" fill="#fff" stroke="#999" stroke-width="2.9"/></svg>
<svg width="20" height="20" viewBox="-10 -10 20 20" style="left:1114.7px;top:747.5px"><circle r="6.9" fill="#fff" stroke="#999" stroke-width="2.9"/></svg>
<div class="b " style="left:970px;top:495.1px;width:150px;height:64.6px;border:5.6px solid #ff0000;box-shadow:2.5px 2.5px 3px rgba(0,0,0,.55), inset 2.5px 2.5px 3px rgba(0,0,0,.45)"></div>
<svg width="220" height="140" viewBox="970 515 220 140" style="left:970px;top:515px">
<path d="M1011.5 591.2 H1047.6 L978.2 522.8 L1072.8 591.2 H1171.7 A10 10 0 0 1 1181.7 601.2 V635.6 A10 10 0 0 1 1171.7 645.6 H1011.5 A10 10 0 0 1 1001.5 635.6 V601.2 A10 10 0 0 1 1011.5 591.2 Z" fill="#fff" stroke="#1a1aff" stroke-width="1.4" stroke-linejoin="round"/></svg>
<span class="t" style="left:1029.09px;top:608.00px;font-size:20.00px;line-height:20.00px;color:#0000ff;font-weight:bold;transform:scaleX(1.0158);">Chart legend</span>
<div class="b " style="left:1141px;top:238px;width:42px;height:42px;background:#ababab;border:1px solid #3c8a5e"></div>
<svg width="42" height="42" viewBox="1141 238 42 42" style="left:1141px;top:238px"><path d="M1160.2 242.4 V274.2 M1144.4 258.3 H1176" stroke="#2f8f5b" stroke-width="1.5" fill="none"/></svg>
<div class="b " style="left:1141px;top:295px;width:42px;height:42px;background:#fff;border:1px solid #a6a6a6"></div>
<svg width="42" height="42" viewBox="1141 295 42 42" style="left:1141px;top:295px">
<path d="M1157.6 318.6 C1163 312.6 1171.6 303.8 1175.6 301.8 C1177.2 301.2 1177.6 302.4 1177 303.6 C1174.6 308.4 1166.4 318 1161 323.4 Z" fill="#f4f4f4" stroke="#3c3c3c" stroke-width="1.3" stroke-linejoin="round"/>
<path d="M1143.6 326.4 C1147.4 326.8 1149.4 325 1150.4 322.6 C1151.8 319.4 1155.6 318 1158.4 320 C1161.4 322.2 1161.4 326.2 1158.6 328.4 C1154.6 331.4 1147.6 330.4 1143.6 326.4 Z" fill="#8fbbe3" stroke="#1b6fc6" stroke-width="1.3" stroke-linejoin="round"/></svg>
<div class="b " style="left:1141px;top:352px;width:42px;height:42px;background:#fff;border:1px solid #a6a6a6"></div>
<svg width="42" height="42" viewBox="1141 352 42 42" style="left:1141px;top:352px"><path d="M1145 357.2 H1175.6 V363 L1163.4 375.2 V388.6 H1157.2 V375.2 L1145 363 Z" fill="#f6f6f6" stroke="#3c3c3c" stroke-width="1.5" stroke-linejoin="miter"/></svg>
<svg width="225" height="304" viewBox="1183 236 225 304" style="left:1183px;top:236px">
<path d="M1195.6 240.4 H1403 V535.6 H1195.6 V268.4 L1186.6 259.2 L1195.6 250 Z" fill="#fff" stroke="#217346" stroke-width="1.2"/></svg>
<span class="t" style="left:1209.89px;top:260.00px;font-size:18.00px;line-height:18.00px;color:#217346;font-weight:bold;transform:scaleX(0.9795);">Chart Elements</span>
<svg width="22" height="22" viewBox="0 0 22 22" style="left:1212px;top:291px"><rect x="0.85" y="0.85" width="20.3" height="20.3" fill="#fcfcfc" stroke="#404040" stroke-width="1.7"/></svg>
<svg width="22" height="22" viewBox="0 0 22 22" style="left:1212px;top:291px"><path d="M2.7 9.9 L8.7 16.1 L19.1 5.5" fill="none" stroke="#3a9866" stroke-width="1.7"/></svg>
<span class="t" style="left:1248.80px;top:294.00px;font-size:18.00px;line-height:18.00px;color:#333;transform:scaleX(0.8904);">Axes</span>
<svg width="22" height="22" viewBox="0 0 22 22" style="left:1212px;top:320px"><rect x="0.85" y="0.85" width="20.3" height="20.3" fill="#fcfcfc" stroke="#404040" stroke-width="1.7"/></svg>
<svg width="22" height="22" viewBox="0 0 22 22" style="left:1212px;top:320px"><path d="M2.7 9.9 L8.7 16.1 L19.1 5.5" fill="none" stroke="#3a9866" stroke-width="1.7"/></svg>
<span class="t" style="left:1248.80px;top:323.00px;font-size:18.00px;line-height:18.00px;color:#333;transform:scaleX(0.9344);">Axis Titles</span>
<svg width="22" height="22" viewBox="0 0 22 22" style="left:1212px;top:349px"><rect x="0.85" y="0.85" width="20.3" height="20.3" fill="#fcfcfc" stroke="#404040" stroke-width="1.7"/></svg>
<svg width="22" height="22" viewBox="0 0 22 22" style="left:1212px;top:349px"><path d="M2.7 9.9 L8.7 16.1 L19.1 5.5" fill="none" stroke="#3a9866" stroke-width="1.7"/></svg>
<span class="t" style="left:1248.33px;top:352.00px;font-size:18.00px;line-height:18.00px;color:#333;transform:scaleX(0.9680);">Chart Title</span>
<svg width="22" height="22" viewBox="0 0 22 22" style="left:1212px;top:378px"><rect x="0.85" y="0.85" width="20.3" height="20.3" fill="#fcfcfc" stroke="#404040" stroke-width="1.7"/></svg>
<svg width="22" height="22" viewBox="0 0 22 22" style="left:1212px;top:378px"><path d="M2.7 9.9 L8.7 16.1 L19.1 5.5" fill="none" stroke="#3a9866" stroke-width="1.7"/></svg>
<span class="t" style="left:1248.44px;top:381.00px;font-size:18.00px;line-height:18.00px;color:#333;transform:scaleX(0.9451);">Data Labels</span>
<svg width="22" height="22" viewBox="0 0 22 22" style="left:1212px;top:407px"><rect x="0.85" y="0.85" width="20.3" height="20.3" fill="#fcfcfc" stroke="#404040" stroke-width="1.7"/></svg>
<span class="t" style="left:1248.27px;top:410.00px;font-size:18.00px;line-height:18.00px;color:#333;transform:scaleX(0.9222);">Error Bars</span>
<svg width="22" height="22" viewBox="0 0 22 22" style="left:1212px;top:436px"><rect x="0.85" y="0.85" width="20.3" height="20.3" fill="#fcfcfc" stroke="#404040" stroke-width="1.7"/></svg>
<svg width="22" height="22" viewBox="0 0 22 22" style="left:1212px;top:436px"><path d="M2.7 9.9 L8.7 16.1 L19.1 5.5" fill="none" stroke="#3a9866" stroke-width="1.7"/></svg>
<span class="t" style="left:1247.94px;top:439.00px;font-size:18.00px;line-height:18.00px;color:#333;transform:scaleX(0.9600);">Gridlines</span>
<svg width="22" height="22" viewBox="0 0 22 22" style="left:1212px;top:494px"><rect x="0.85" y="0.85" width="20.3" height="20.3" fill="#fcfcfc" stroke="#404040" stroke-width="1.7"/></svg>
<span class="t" style="left:1249.27px;top:497.00px;font-size:18.00px;line-height:18.00px;color:#333;transform:scaleX(0.9227);">Trendline</span>
<div class="b " style="left:1195.4px;top:453.4px;width:141.8px;height:43.4px;background:#fff;border:5.7px solid #ff0000;box-shadow:3px 3px 4px rgba(0,0,0,.5), inset 2.5px 2.5px 3px rgba(0,0,0,.4)"></div>
<svg width="22" height="22" viewBox="0 0 22 22" style="left:1212px;top:465px"><rect x="0.85" y="0.85" width="20.3" height="20.3" fill="#fcfcfc" stroke="#404040" stroke-width="1.7"/></svg>
<svg width="22" height="22" viewBox="0 0 22 22" style="left:1212px;top:465px"><path d="M2.7 9.9 L8.7 16.1 L19.1 5.5" fill="none" stroke="#3a9866" stroke-width="1.7"/></svg>
<span class="t" style="left:1248.22px;top:468.00px;font-size:18.00px;line-height:18.00px;color:#333;transform:scaleX(0.9598);">Legend</span>
<div class="b " style="left:24px;top:789px;width:1375px;height:33px;background:#e6e6e6"></div>
<div class="b " style="left:452px;top:788.5px;width:917px;height:1px;background:#ababab"></div>
<div class="b " style="left:24px;top:788.5px;width:118px;height:1px;background:#ababab"></div>
<div class="b " style="left:24px;top:822px;width:1375px;height:1px;background:#c8c8c8"></div>
<svg width="60" height="16" viewBox="48 796 60 16" style="left:48px;top:796px"><path d="M59.6 798.4 V809.6 L53.4 804 Z" fill="#c4c4c4"/><path d="M87.4 798.4 V809.6 L93.6 804 Z" fill="#1e6b41"/></svg>
<div class="b " style="left:142px;top:788px;width:310px;height:31px;background:#fff;border-bottom:2.5px solid #217346;border-right:1px solid #ababab;border-left:1px solid #c6c6c6"></div>
<span class="t" style="left:153.71px;top:794.00px;font-size:19.60px;line-height:19.60px;color:#217346;font-weight:bold;transform:scaleX(1.0143);">MedianEarnings-Prices ratio 2</span>
<span class="t" style="left:474.45px;top:794.00px;font-size:19.20px;line-height:19.20px;color:#444;transform:scaleX(1.0119);">MedianEarnings-Prices ratio 4</span>
<div class="b " style="left:760px;top:792px;width:1px;height:26px;background:#8c8c8c"></div>
<span class="t" style="left:769.11px;top:794.00px;font-size:19.00px;line-height:19.00px;color:#1e6b41;font-weight:bold;transform:scaleX(1.2030);">...</span>
<svg width="24" height="24" viewBox="800 793 24 24" style="left:800px;top:793px" fill="none" stroke="#6a6a6a" stroke-width="1.4"><circle cx="811.9" cy="804.8" r="10.2"/><path d="M811.9 799.4 V810.2 M806.5 804.8 H817.3"/></svg>
<div class="b " style="left:845.1px;top:797.4px;width:2.6px;height:2.6px;background:#adadad"></div>
<div class="b " style="left:845.1px;top:803.6px;width:2.6px;height:2.6px;background:#adadad"></div>
<div class="b " style="left:845.1px;top:809.8px;width:2.6px;height:2.6px;background:#adadad"></div>
<div class="b " style="left:866px;top:792.5px;width:24px;height:24px;background:#fff;border:1px solid #c6c6c6"></div>
<svg width="8" height="12" viewBox="0 0 8 12" style="left:873.4px;top:798.5px"><path d="M7.4 0.4 V11.6 L1 6 Z" fill="#666"/></svg>
<div class="b " style="left:890px;top:792.5px;width:420px;height:24px;background:#fff;border:1px solid #ababab"></div>
<div class="b " style="left:1310px;top:792.5px;width:36px;height:24px;background:#dcdcdc"></div>
<div class="b " style="left:1346px;top:792.5px;width:24px;height:24px;background:#fff;border:1px solid #c6c6c6"></div>
<svg width="8" height="12" viewBox="0 0 8 12" style="left:1354px;top:798.5px"><path d="M0.6 0.4 V11.6 L7 6 Z" fill="#666"/></svg>
<div class="b " style="left:24px;top:823px;width:1375px;height:32px;background:#f3f2f1"></div>
<div class="b " style="left:998px;top:823px;width:45px;height:32px;background:#c8c8c8"></div>
<svg width="130" height="24" viewBox="1005 826 130 24" style="left:1005px;top:826px" fill="none" stroke="#6a6a6a" stroke-width="1.3">
<rect x="1011" y="829.6" width="18.6" height="16.4"/><path d="M1017.2 829.6 V846 M1023.4 829.6 V846 M1011 835 H1029.6 M1011 840.6 H1029.6"/>
<rect x="1056.6" y="829.6" width="18.4" height="16.6"/><rect x="1061.2" y="833.2" width="9.2" height="9.6"/><path d="M1063.4 836 H1068.2 M1063.4 838.2 H1068.2 M1063.4 840.4 H1068.2" stroke-width="1"/>
<rect x="1101.4" y="829.6" width="18.4" height="16.6"/><path d="M1107.4 829.6 V839.2 H1113.6 V829.6 M1101.4 839.2 H1119.8"/>
</svg>
<div class="b " style="left:1138.6px;top:836.4px;width:11.4px;height:2.2px;background:#5e5e5e"></div>
<div class="b " style="left:1156px;top:837.2px;width:148px;height:1.2px;background:#9a9a9a"></div>
<div class="b " style="left:1226px;top:830px;width:7.6px;height:16px;background:#777"></div>
<div class="b " style="left:1308.4px;top:836.6px;width:12.6px;height:2.2px;background:#5e5e5e"></div>
<div class="b " style="left:1313.6px;top:831.4px;width:2.2px;height:12.6px;background:#5e5e5e"></div>
<span class="t" style="left:1334.64px;top:830.00px;font-size:15.20px;line-height:15.20px;color:#555;transform:scaleX(1.0204);">100%</span>
</body></html>
